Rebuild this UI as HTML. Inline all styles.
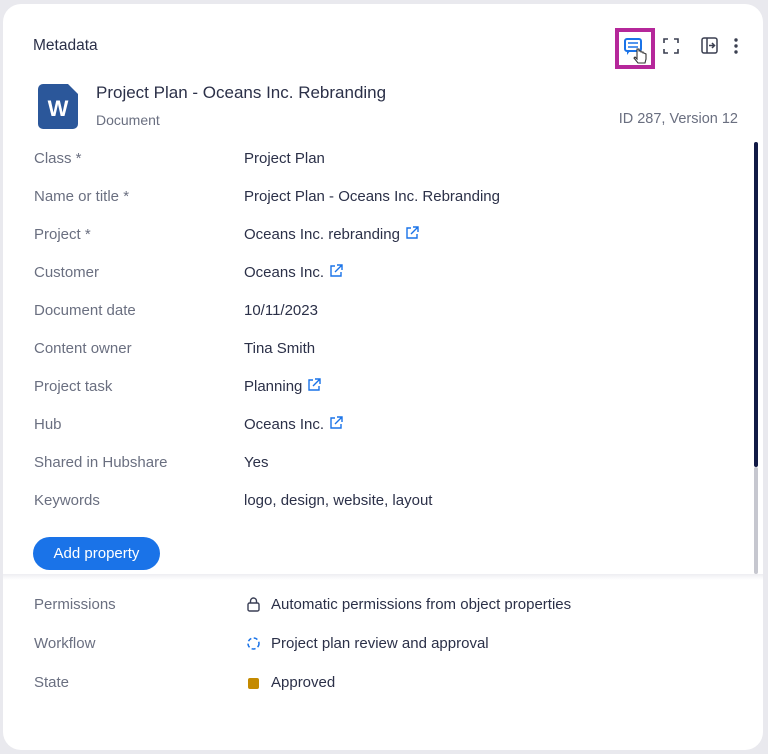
<!DOCTYPE html>
<html><head><style>
*{margin:0;padding:0;box-sizing:border-box}
body{width:768px;height:754px;background:#e9e9ee;font-family:"Liberation Sans",sans-serif;position:relative;overflow:hidden;color:#2b3048}
.card{position:absolute;left:3px;top:4px;width:760px;height:746px;background:#fff;border-radius:18px;overflow:hidden}
.t{position:absolute;font-size:15px;white-space:nowrap}
.l{color:#6a6f80;left:31px}
.v{left:241px;color:#2b3048}
.ext{display:inline-block;vertical-align:-1px;margin-left:5px}
</style></head><body>
<div class="card">
<div class="t" style="left:30px;top:33px;font-size:15.5px;color:#2b3048">Metadata</div>
<div style="position:absolute;left:612px;top:24px;width:40px;height:41px;border:4px solid #b5279a;"></div>
<svg style="position:absolute;left:620px;top:33px" width="30" height="30" viewBox="0 0 30 30"><rect x="2" y="2" width="16" height="12" rx="2" fill="none" stroke="#1a73e8" stroke-width="2"/><path d="M5 6h10M5 10h10" stroke="#1a73e8" stroke-width="1.6"/><path d="M4 14v4l3-4" fill="#1a73e8"/><path d="M14 12v10l-2-2-1 1 4 5h7l1-4v-5l-2-1-1 0v-1l-2 0v-1l-2 0V12z" fill="#fff" stroke="#333" stroke-width="1.1"/></svg>
<svg style="position:absolute;left:660px;top:34px" width="16" height="16" viewBox="0 0 16 16" fill="none" stroke="#3a3f50" stroke-width="1.6"><path d="M1 5V1h4M11 1h4v4M15 11v4h-4M5 15H1v-4"/></svg>
<svg style="position:absolute;left:698px;top:33px" width="17" height="17" viewBox="0 0 17 17" fill="none" stroke="#3a3f50" stroke-width="1.5"><rect x="1" y="1" width="15" height="15" rx="2"/><path d="M6 1v15M8 8.5h5M11 6l2.5 2.5L11 11"/></svg>
<svg style="position:absolute;left:731px;top:34px" width="4" height="16"><circle cx="2" cy="2" r="1.7" fill="#3a3f50"/><circle cx="2" cy="8" r="1.7" fill="#3a3f50"/><circle cx="2" cy="14" r="1.7" fill="#3a3f50"/></svg>
<svg style="position:absolute;left:35px;top:80px" width="40" height="45" viewBox="0 0 40 45"><path d="M5 0h25l10 10v30a5 5 0 0 1-5 5H5a5 5 0 0 1-5-5V5a5 5 0 0 1 5-5z" fill="#2b579a"/><text x="20" y="32" text-anchor="middle" font-family="Liberation Sans" font-weight="bold" font-size="22" fill="#fff">W</text></svg>
<div class="t" style="left:93px;top:79px;font-size:17px;color:#2b3048">Project Plan - Oceans Inc. Rebranding</div>
<div class="t" style="left:93px;top:108px;font-size:14px;color:#6a6f80">Document</div>
<div class="t" style="right:25px;top:107px;font-size:14.5px;color:#6a6f80">ID 287, Version 12</div>
<div style="position:absolute;left:751px;top:138px;width:4px;height:325px;background:#111a45;border-radius:2px"></div>
<div style="position:absolute;left:751px;top:463px;width:4px;height:107px;background:#c6c7cf;border-radius:2px"></div>

<div class="t l" style="top:146px">Class *</div><div class="t v" style="top:146px">Project Plan</div>
<div class="t l" style="top:184px">Name or title *</div><div class="t v" style="top:184px">Project Plan - Oceans Inc. Rebranding</div>
<div class="t l" style="top:222px">Project *</div><div class="t v" style="top:222px">Oceans Inc. rebranding<svg class="ext" width="14" height="14" viewBox="0 0 14 14" fill="none" stroke="#1a73e8" stroke-width="1.4"><path d="M6 2H2v10h10V8M8 1h5v5M13 1L6 8"/></svg></div>
<div class="t l" style="top:260px">Customer</div><div class="t v" style="top:260px">Oceans Inc.<svg class="ext" width="14" height="14" viewBox="0 0 14 14" fill="none" stroke="#1a73e8" stroke-width="1.4"><path d="M6 2H2v10h10V8M8 1h5v5M13 1L6 8"/></svg></div>
<div class="t l" style="top:298px">Document date</div><div class="t v" style="top:298px">10/11/2023</div>
<div class="t l" style="top:336px">Content owner</div><div class="t v" style="top:336px">Tina Smith</div>
<div class="t l" style="top:374px">Project task</div><div class="t v" style="top:374px">Planning<svg class="ext" width="14" height="14" viewBox="0 0 14 14" fill="none" stroke="#1a73e8" stroke-width="1.4"><path d="M6 2H2v10h10V8M8 1h5v5M13 1L6 8"/></svg></div>
<div class="t l" style="top:412px">Hub</div><div class="t v" style="top:412px">Oceans Inc.<svg class="ext" width="14" height="14" viewBox="0 0 14 14" fill="none" stroke="#1a73e8" stroke-width="1.4"><path d="M6 2H2v10h10V8M8 1h5v5M13 1L6 8"/></svg></div>
<div class="t l" style="top:450px">Shared in Hubshare</div><div class="t v" style="top:450px">Yes</div>
<div class="t l" style="top:488px">Keywords</div><div class="t v" style="top:488px">logo, design, website, layout</div>
<div style="position:absolute;left:30px;top:533px;width:127px;height:33px;background:#1a73e8;border-radius:17px;color:#fff;font-size:15px;line-height:33px;text-align:center">Add property</div>

<div style="position:absolute;left:0;top:570px;width:760px;height:6px;background:linear-gradient(#eeeef2,#fff)"></div>
<div class="t l" style="top:592px">Permissions</div>
<svg style="position:absolute;left:244px;top:593px" width="13" height="15" viewBox="0 0 13 15" fill="none" stroke="#3a3f55" stroke-width="1.4"><rect x="1" y="6" width="11" height="8" rx="1.5"/><path d="M3.5 6V4a3 3 0 0 1 6 0v2"/></svg>
<div class="t" style="left:268px;top:592px">Automatic permissions from object properties</div>
<div class="t l" style="top:631px">Workflow</div>
<svg style="position:absolute;left:243px;top:632px" width="15" height="15" viewBox="0 0 15 15" fill="none" stroke="#1a73e8" stroke-width="1.5" stroke-dasharray="4 2.5"><circle cx="7.5" cy="7.5" r="5.5"/></svg>
<div class="t" style="left:268px;top:631px">Project plan review and approval</div>
<div class="t l" style="top:670px">State</div>
<div style="position:absolute;left:245px;top:674px;width:11px;height:11px;background:#c48a00;border-radius:2px"></div>
<div class="t" style="left:268px;top:670px">Approved</div>
</div>
</body></html>
